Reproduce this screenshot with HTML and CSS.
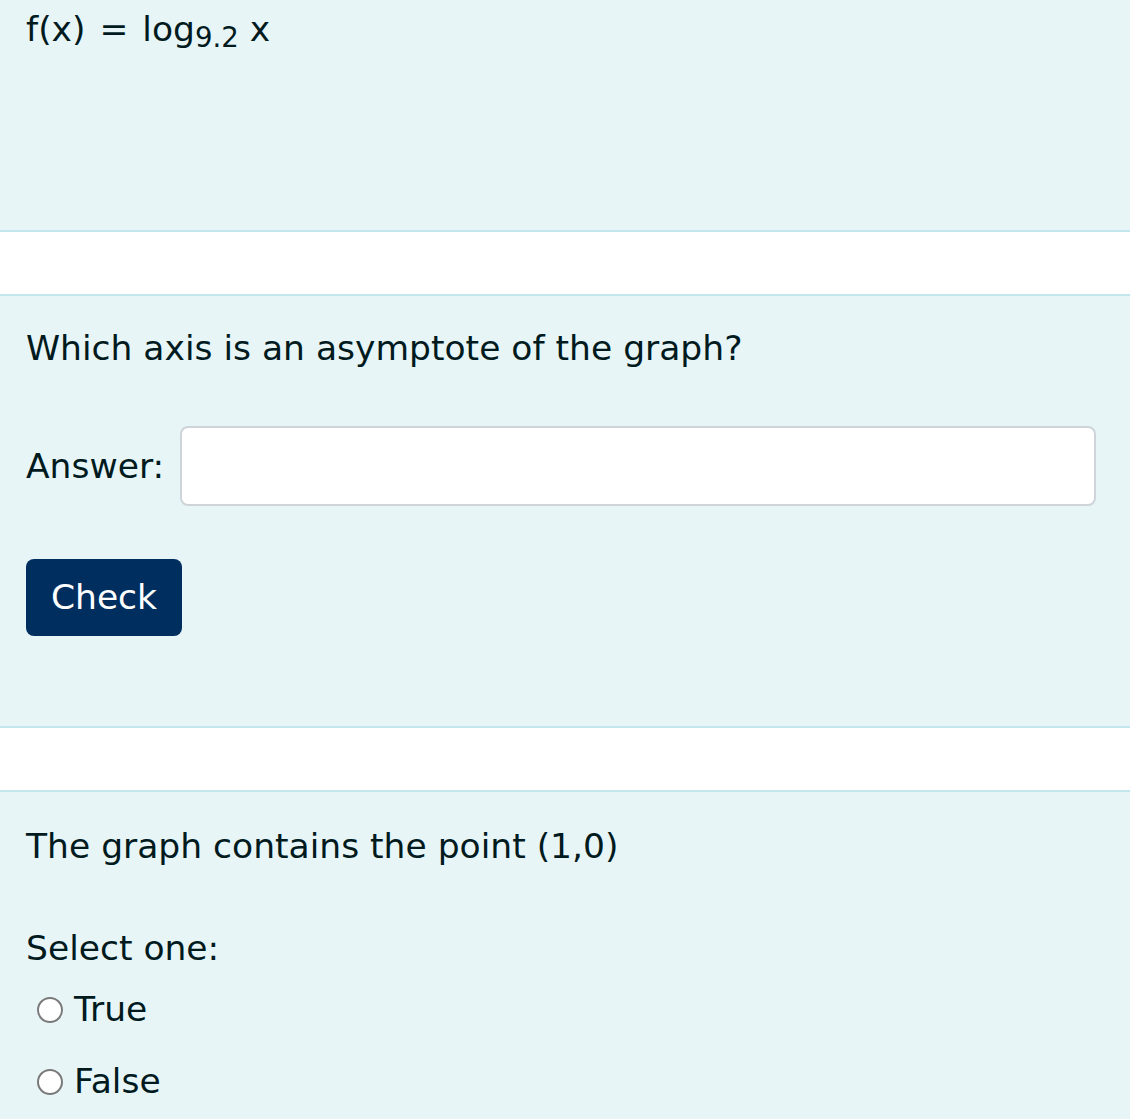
FILE: index.html
```html
<!DOCTYPE html>
<html>
<head>
<meta charset="utf-8">
<link rel="stylesheet" href="styles.css">
</head>
<body>
<div class="card card-first">
  <p class="formula">f(x) = log<sub>9.2</sub><span class="tight"> x</span></p>
</div>
<div class="gap"></div>
<div class="card card-q2">
  <p class="qtext">Which axis is an asymptote of the graph?</p>
  <div class="answer-row">
    <label class="answer-label">Answer:</label>
    <input class="answer-input" type="text">
  </div>
  <button class="check-btn">Check</button>
</div>
<div class="gap"></div>
<div class="card card-q3">
  <p class="qtext">The graph contains the point (1,0)</p>
  <p class="prompt">Select one:</p>
  <div class="options">
    <label class="option"><span class="radio"></span>True</label>
    <label class="option"><span class="radio"></span>False</label>
  </div>
</div>
</body>
</html>
```

FILE: styles.css
```css
html, body {
  margin: 0;
  padding: 0;
  background: #ffffff;
}
body {
  font-family: "DejaVu Sans", Verdana, sans-serif;
  font-size: 34.5px;
  color: #001a1e;
  line-height: 51px;
}
.card {
  background: #e7f5f7;
  padding: 0 26px;
  box-sizing: border-box;
}
.card-first {
  height: 232px;
  border-bottom: 2px solid #c3e5ec;
}
.formula {
  margin: 0;
  padding-top: 4px;
  word-spacing: 3px;
}
.formula sub {
  font-size: 0.8em;
  vertical-align: -6px;
  line-height: 0;
}
.formula .tight {
  word-spacing: 0;
}
.gap {
  height: 62px;
}
.card-q2 {
  border-top: 2px solid #c3e5ec;
  border-bottom: 2px solid #c3e5ec;
  height: 434px;
  padding-top: 27px;
}
.qtext {
  margin: 0;
}
.answer-row {
  display: flex;
  align-items: center;
  margin-top: 52px;
  gap: 16px;
}
.answer-input {
  flex: 1;
  height: 80px;
  box-sizing: border-box;
  border: 2px solid #ced4da;
  border-radius: 8px;
  background: #fff;
  margin: 0 8px 0 0;
  font: inherit;
}
.check-btn {
  display: block;
  margin-top: 53px;
  background: #002f5f;
  color: #fff;
  border: none;
  border-radius: 8px;
  width: 156px;
  height: 77px;
  padding: 0;
  font: inherit;
  cursor: pointer;
}
.card-q3 {
  border-top: 2px solid #c3e5ec;
  height: 329px;
  padding-top: 29px;
}
.prompt {
  margin: 51px 0 0;
}
.options {
  margin-top: 10px;
  padding-left: 11px;
  display: flex;
  flex-direction: column;
  gap: 21px;
}
.option {
  display: flex;
  align-items: center;
  gap: 11px;
}
.radio {
  width: 22px;
  height: 22px;
  border: 2px solid #7a7a7a;
  border-radius: 50%;
  background: #fff;
}
```
